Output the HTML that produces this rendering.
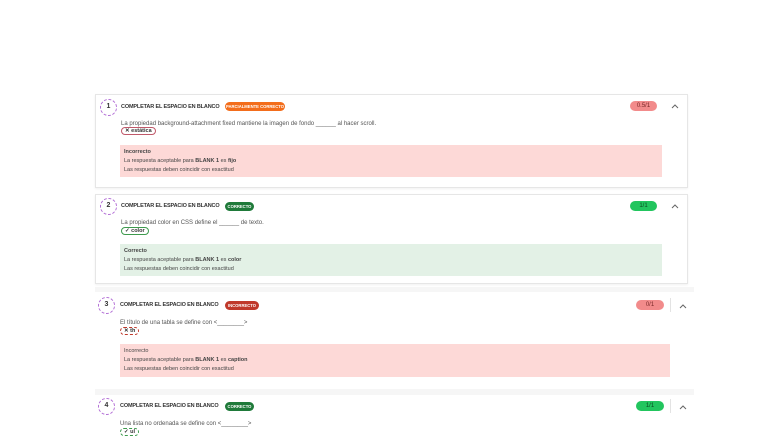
<!DOCTYPE html>
<html><head><meta charset="utf-8"><style>
*{margin:0;padding:0;box-sizing:border-box}
body{width:784px;height:441px;background:#fff;font-family:"Liberation Sans",sans-serif;position:relative;overflow:hidden;color:#333}
.card{position:absolute;background:#fff;border:1px solid #e6e6e6;box-shadow:0 1px 2px rgba(0,0,0,.06)}
.num{position:absolute;width:17px;height:17px;border:1.5px dashed #b36fd6;border-radius:50%;font-size:7px;font-weight:bold;text-align:center;line-height:14px;color:#333}
.title{position:absolute;font-size:5.5px;font-weight:bold;color:#333;letter-spacing:-.15px;white-space:nowrap}
.badge{position:absolute;height:9px;border-radius:5px;color:#fff;font-size:4.2px;font-weight:bold;text-align:center;line-height:9px;white-space:nowrap;overflow:hidden}
.pill{position:absolute;height:10px;border-radius:5px;font-size:6px;text-align:center;line-height:10px}
.chev{position:absolute;width:8px;height:6px}
.q{position:absolute;font-size:6px;color:#555;white-space:nowrap}
.tag{position:absolute;height:8px;border-radius:4px;font-size:5.5px;font-weight:bold;line-height:7px;padding:0 3px}
.fb{position:absolute;font-size:5.5px;color:#444;line-height:9px;padding:3px 4px}
.sep{position:absolute;width:1px;height:14px;background:#e3e3e3}
</style></head><body>

<div class="card" style="left:95px;top:94px;width:593px;height:94px"></div>
<div class="num" style="left:100px;top:99px">1</div>
<div class="title" style="left:121px;top:104px">COMPLETAR EL ESPACIO EN BLANCO</div>
<div class="badge" style="left:225px;top:102px;width:60px;background:#f36d1b">PARCIALMENTE CORRECTO</div>
<div class="pill" style="left:630px;top:101px;width:27px;background:#f28b8b;color:#7a2a2a">0.5/1</div>
<svg class="chev" style="left:671px;top:103px" viewBox="0 0 8 6"><path d="M1 5 L4 2 L7 5" fill="none" stroke="#666" stroke-width="1"/></svg>
<div class="q" style="left:121px;top:121px">La propiedad background-attachment fixed mantiene la imagen de fondo ______ al hacer scroll.</div>
<div class="tag" style="left:121px;top:127px;border:1px solid #c0596a;color:#333">✕ estática</div>
<div class="fb" style="left:120px;top:145px;width:542px;height:32px;background:#fdd9d7"><b>Incorrecto</b><br>La respuesta aceptable para <b>BLANK 1</b> es <b>fijo</b><br>Las respuestas deben coincidir con exactitud</div>

<div class="card" style="left:95px;top:194px;width:593px;height:90px"></div>
<div class="num" style="left:100px;top:198px">2</div>
<div class="title" style="left:121px;top:203px">COMPLETAR EL ESPACIO EN BLANCO</div>
<div class="badge" style="left:225px;top:202px;width:29px;background:#1f7a3a">CORRECTO</div>
<div class="pill" style="left:630px;top:201px;width:27px;background:#22c55e;color:#0b4d22">1/1</div>
<svg class="chev" style="left:671px;top:203px" viewBox="0 0 8 6"><path d="M1 5 L4 2 L7 5" fill="none" stroke="#666" stroke-width="1"/></svg>
<div class="q" style="left:121px;top:220px">La propiedad color en CSS define el ______ de texto.</div>
<div class="tag" style="left:121px;top:227px;border:1px solid #3d9a4d;color:#333">✓ color</div>
<div class="fb" style="left:120px;top:244px;width:542px;height:32px;background:#e3f1e6"><b>Correcto</b><br>La respuesta aceptable para <b>BLANK 1</b> es <b>color</b><br>Las respuestas deben coincidir con exactitud</div>

<div style="position:absolute;left:95px;top:287px;width:599px;height:5px;background:#f6f6f6"></div>
<div class="num" style="left:98px;top:297px">3</div>
<div class="title" style="left:120px;top:302px">COMPLETAR EL ESPACIO EN BLANCO</div>
<div class="badge" style="left:225px;top:301px;width:34px;background:#c0392b">INCORRECTO</div>
<div class="pill" style="left:636px;top:300px;width:28px;background:#f28b8b;color:#7a2a2a">0/1</div>
<div class="sep" style="left:670px;top:298px"></div>
<svg class="chev" style="left:679px;top:303px" viewBox="0 0 8 6"><path d="M1 5 L4 2 L7 5" fill="none" stroke="#666" stroke-width="1"/></svg>
<div class="q" style="left:120px;top:320px">El título de una tabla se define con &lt;________&gt;</div>
<div class="tag" style="left:120px;top:327px;border:1px dashed #c0392b;color:#333">✕ th</div>
<div class="fb" style="left:120px;top:344px;width:550px;height:33px;background:#fdd9d7">Incorrecto<br>La respuesta aceptable para <b>BLANK 1</b> es <b>caption</b><br>Las respuestas deben coincidir con exactitud</div>

<div style="position:absolute;left:95px;top:389px;width:599px;height:6px;background:#f6f6f6"></div>
<div class="num" style="left:98px;top:398px">4</div>
<div class="title" style="left:120px;top:403px">COMPLETAR EL ESPACIO EN BLANCO</div>
<div class="badge" style="left:225px;top:402px;width:29px;background:#1f7a3a">CORRECTO</div>
<div class="pill" style="left:636px;top:401px;width:28px;background:#22c55e;color:#0b4d22">1/1</div>
<div class="sep" style="left:670px;top:399px"></div>
<svg class="chev" style="left:679px;top:404px" viewBox="0 0 8 6"><path d="M1 5 L4 2 L7 5" fill="none" stroke="#666" stroke-width="1"/></svg>
<div class="q" style="left:120px;top:421px">Una lista no ordenada se define con &lt;________&gt;</div>
<div class="tag" style="left:120px;top:428px;border:1px dashed #3d9a4d;color:#333">✓ ul</div>
</body></html>
